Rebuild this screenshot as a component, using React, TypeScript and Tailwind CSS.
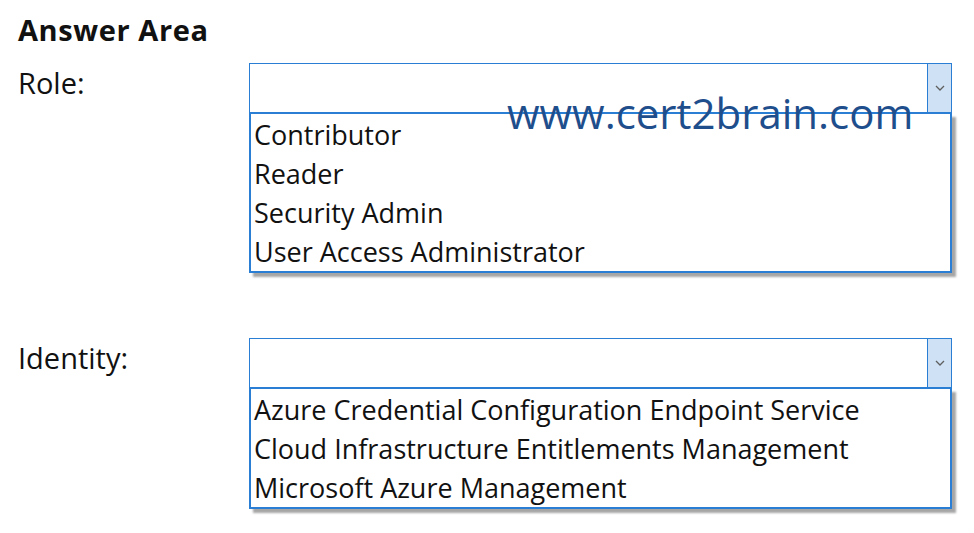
const roles = ["Contributor", "Reader", "Security Admin", "User Access Administrator"];

const identities = [
  "Azure Credential Configuration Endpoint Service",
  "Cloud Infrastructure Entitlements Management",
  "Microsoft Azure Management",
];

function Chevron() {
  return (
    <svg width="10" height="6" viewBox="0 0 10 6" className="text-[#5f5f5f]">
      <path d="M1 1 L5 5 L9 1" fill="none" stroke="currentColor" strokeWidth="1.3" />
    </svg>
  );
}

function DropDown({ items }: { items: string[] }) {
  return (
    <div className="w-[703px]">
      <div className="flex h-[50px] border border-[#2a7fd4] bg-white">
        <div className="flex-1" />
        <div className="flex w-[24px] items-center justify-center border-l border-[#2a7fd4] bg-[#cfe2f5]">
          <Chevron />
        </div>
      </div>
      <div className="border-2 border-t border-[#2a7fd4] bg-white pt-[1px] pb-0 pl-[3px] shadow-[4px_4px_2px_rgba(0,0,0,0.35)]">
        {items.map((item) => (
          <div key={item} className="text-[27px] leading-[39px] text-[#111]">
            {item}
          </div>
        ))}
      </div>
    </div>
  );
}

export default function App() {
  return (
    <div className="relative h-[533px] w-[974px] bg-white pl-[18px] pt-[12px] font-['Open_Sans','Lato',sans-serif]">
      <h1 className="h-[36px] text-[29px] font-bold leading-[36px] tracking-[0.6px] text-[#111]">
        Answer Area
      </h1>

      <div className="mt-[15px] flex">
        <div className="w-[231px] text-[29px] leading-[40px] text-[#111]">Role:</div>
        <DropDown items={roles} />
      </div>

      <div className="mt-[65px] flex">
        <div className="w-[231px] text-[29px] leading-[40px] text-[#111]">Identity:</div>
        <DropDown items={identities} />
      </div>

      <div className="absolute left-[507px] top-[89px] text-[42px] leading-[48px] text-[#1f4e8c]">
        www.cert2brain.com
      </div>
    </div>
  );
}
